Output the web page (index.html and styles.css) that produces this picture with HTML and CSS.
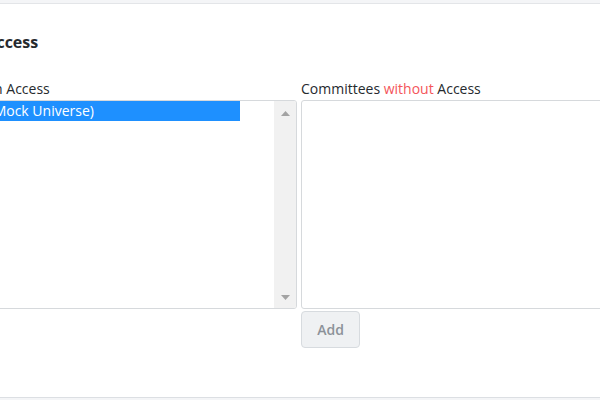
FILE: index.html
```html
<!DOCTYPE html>
<html>
<head>
<meta charset="utf-8">
<link rel="stylesheet" href="styles.css">
</head>
<body>
<div class="page">
  <section class="card">
    <h2 class="card-title">Committee Access</h2>
    <div class="columns">
      <div class="column">
        <label class="field-label">Committees with Access</label>
        <div class="listbox">
          <ul class="options">
            <li class="option selected">Committee A (Mock Universe)</li>
          </ul>
          <div class="scrollbar">
            <svg class="arrow" width="9" height="5" viewBox="0 0 9 5"><path d="M0 5 L4.5 0 L9 5 Z" fill="#a3a3a3"/></svg>
            <svg class="arrow" width="9" height="5" viewBox="0 0 9 5"><path d="M0 0 L4.5 5 L9 0 Z" fill="#a3a3a3"/></svg>
          </div>
        </div>
      </div>
      <div class="column">
        <label class="field-label">Committees <span class="neg">without</span> Access</label>
        <div class="listbox empty"></div>
        <button class="btn" disabled>Add</button>
      </div>
    </div>
  </section>
</div>
</body>
</html>
```
FILE: styles.css
```css
html, body {
  margin: 0;
  padding: 0;
}
body {
  background: #f4f5f7;
  font-family: "Open Sans", "Noto Sans", sans-serif;
  color: #262a2e;
  overflow: hidden;
  width: 600px;
  height: 400px;
}
.page {
  padding-top: 3px;
}
.card {
  margin-left: -128px;
  width: 1000px;
  background: #fff;
  border-top: 1px solid #e3e5e8;
  border-bottom: 1px solid #dcdfe3;
  padding: 26px 20px 0 20px;
  box-sizing: border-box;
  height: 395px;
}
.card-title {
  margin: 0;
  font-size: 16px;
  line-height: 24px;
  font-weight: 700;
}
.columns {
  display: flex;
  gap: 4px;
  margin-top: 24px;
}
.column {
  width: 405px;
  display: flex;
  flex-direction: column;
  align-items: flex-start;
}
.field-label {
  font-size: 14px;
  line-height: 21px;
  margin-bottom: 1px;
}
.neg {
  color: #f4555a;
}
.listbox {
  width: 405px;
  height: 209px;
  box-sizing: border-box;
  border: 1px solid #d6d9dc;
  border-radius: 3px;
  background: #fff;
  display: flex;
  overflow: hidden;
}
.options {
  list-style: none;
  margin: 0;
  padding: 0 34px 0 0;
  flex: 1;
}
.option {
  font-size: 14px;
  line-height: 20px;
  padding: 0 4px 0 8px;
  white-space: nowrap;
}
.option.selected {
  background: #1e90ff;
  color: #fff;
}
.scrollbar {
  width: 22px;
  background: #f1f1f1;
  display: flex;
  flex-direction: column;
  justify-content: space-between;
  align-items: center;
  padding: 10px 0 8px;
  box-sizing: border-box;
}
.arrow {
  display: block;
}
.btn {
  margin-top: 2px;
  width: 59px;
  height: 37px;
  font-family: inherit;
  font-size: 14px;
  font-weight: 600;
  color: #8c9299;
  background: #eff1f3;
  border: 1px solid #d7dbdf;
  border-radius: 4px;
  padding: 0;
}
```
